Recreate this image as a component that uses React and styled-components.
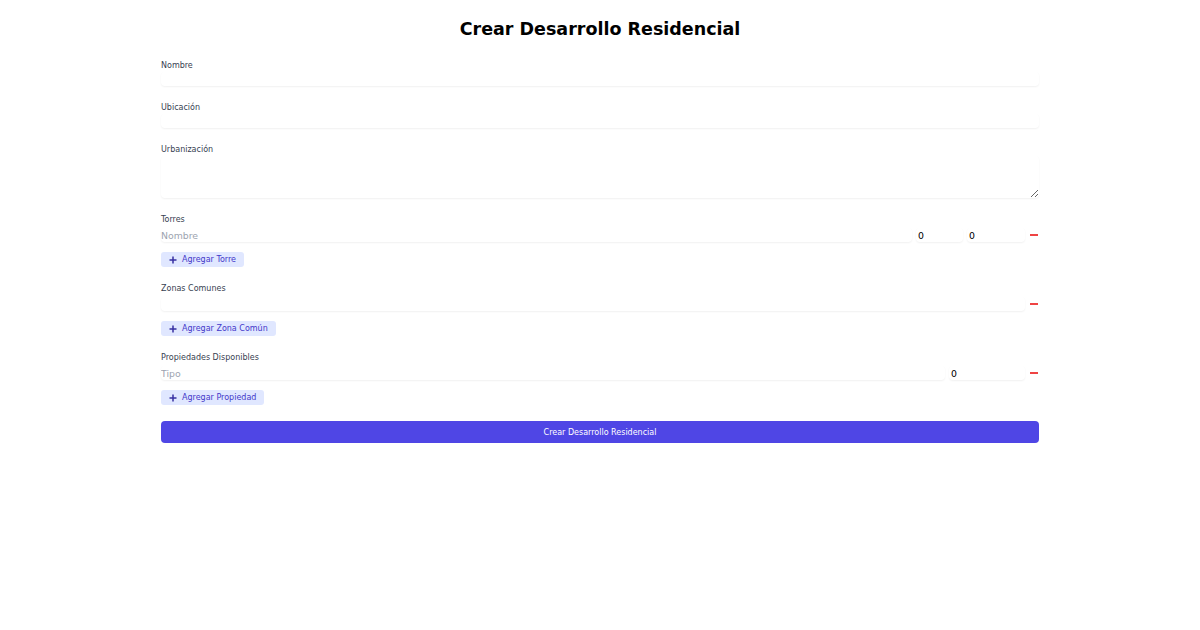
import React from "react";
import styled, { createGlobalStyle } from "styled-components";

const Global = createGlobalStyle`
  * { box-sizing: border-box; }
  html, body { margin: 0; padding: 0; background: #ffffff; }
  body { font-family: "DejaVu Sans", sans-serif; color: #111827; }
  input::placeholder, textarea::placeholder { color: #9ca3af; }
  input[type=number]::-webkit-inner-spin-button,
  input[type=number]::-webkit-outer-spin-button { -webkit-appearance: none; margin: 0; }
`;

const Page = styled.div`
  width: 878px;
  margin: 0 auto;
  padding-top: 17px;
`;

const Title = styled.h1`
  margin: 0 0 17px;
  font-size: 17.5px;
  line-height: 24px;
  font-weight: 700;
  text-align: center;
  color: #000;
`;

const Form = styled.form`
  display: flex;
  flex-direction: column;
  gap: 14px;
`;

const Field = styled.div`
  display: flex;
  flex-direction: column;
`;

const Label = styled.label`
  display: block;
  font-size: 8px;
  line-height: 12px;
  padding-top: 2px;
  color: #374151;
  margin-bottom: ${(p) => (p.$section ? "2px" : "0")};
`;

const Input = styled.input`
  display: block;
  width: ${(p) => (p.$w ? `${p.$w}px` : "100%")};
  flex: ${(p) => (p.$grow ? "1 1 0" : "none")};
  min-width: 0;
  height: 14px;
  padding: 0 ${(p) => (p.$w ? "2px" : "0")};
  border: none;
  outline: none;
  border-radius: 4px;
  background: #fff;
  box-shadow: 0 1px 2px 0 rgba(0, 0, 0, 0.06);
  font-family: "DejaVu Sans", sans-serif;
  font-size: 9.33px;
  color: #000;
`;

const TextArea = styled.textarea`
  display: block;
  width: 100%;
  height: 42px;
  padding: 0;
  border: none;
  outline: none;
  border-radius: 4px;
  background: #fff;
  box-shadow: 0 1px 2px 0 rgba(0, 0, 0, 0.06);
  font-family: "DejaVu Sans", sans-serif;
  font-size: 9.33px;
`;

const Row = styled.div`
  display: flex;
  align-items: center;
  gap: 4px;
`;

const RemoveButton = styled.button`
  flex: none;
  width: 10px;
  height: 14px;
  padding: 0;
  margin: 0;
  border: none;
  background: transparent;
  display: flex;
  align-items: center;
  justify-content: center;
  cursor: pointer;
`;

const AddButton = styled.button`
  align-self: flex-start;
  display: inline-flex;
  align-items: center;
  gap: 5px;
  height: 15px;
  margin-top: 10px;
  padding: 0 8px;
  border: none;
  border-radius: 3px;
  background: #e0e7ff;
  color: #4338ca;
  font-family: "DejaVu Sans", sans-serif;
  font-size: 8px;
  line-height: 15px;
  cursor: pointer;
`;

const Submit = styled.button`
  width: 100%;
  height: 22px;
  margin-top: 2px;
  border: none;
  border-radius: 4px;
  background: #4f46e5;
  color: #ffffff;
  font-family: "DejaVu Sans", sans-serif;
  font-size: 8px;
  cursor: pointer;
`;

const MinusIcon = () => (
  <svg width="10" height="10" viewBox="0 0 10 10">
    <path d="M1 5H9" stroke="#ef4444" strokeWidth="2" />
  </svg>
);

const PlusIcon = () => (
  <svg width="8" height="8" viewBox="0 0 8 8">
    <path d="M4 0.5V7.5M0.5 4H7.5" stroke="#3730a3" strokeWidth="1.5" />
  </svg>
);

const Section = ({ label, children, addLabel }) => (
  <Field>
    <Label $section>{label}</Label>
    {children}
    <AddButton type="button">
      <PlusIcon />
      {addLabel}
    </AddButton>
  </Field>
);

export default function App() {
  return (
    <>
      <Global />
      <Page>
        <Title>Crear Desarrollo Residencial</Title>
        <Form onSubmit={(e) => e.preventDefault()}>
          <Field>
            <Label>Nombre</Label>
            <Input type="text" />
          </Field>
          <Field>
            <Label>Ubicación</Label>
            <Input type="text" />
          </Field>
          <Field>
            <Label>Urbanización</Label>
            <TextArea />
          </Field>
          <Section label="Torres" addLabel="Agregar Torre">
            <Row>
              <Input type="text" placeholder="Nombre" $grow />
              <Input type="number" defaultValue={0} $w={47} />
              <Input type="number" defaultValue={0} $w={58} />
              <RemoveButton type="button">
                <MinusIcon />
              </RemoveButton>
            </Row>
          </Section>
          <Section label="Zonas Comunes" addLabel="Agregar Zona Común">
            <Row>
              <Input type="text" $grow />
              <RemoveButton type="button">
                <MinusIcon />
              </RemoveButton>
            </Row>
          </Section>
          <Section label="Propiedades Disponibles" addLabel="Agregar Propiedad">
            <Row>
              <Input type="text" placeholder="Tipo" $grow />
              <Input type="number" defaultValue={0} $w={76} />
              <RemoveButton type="button">
                <MinusIcon />
              </RemoveButton>
            </Row>
          </Section>
          <Submit type="submit">Crear Desarrollo Residencial</Submit>
        </Form>
      </Page>
    </>
  );
}
